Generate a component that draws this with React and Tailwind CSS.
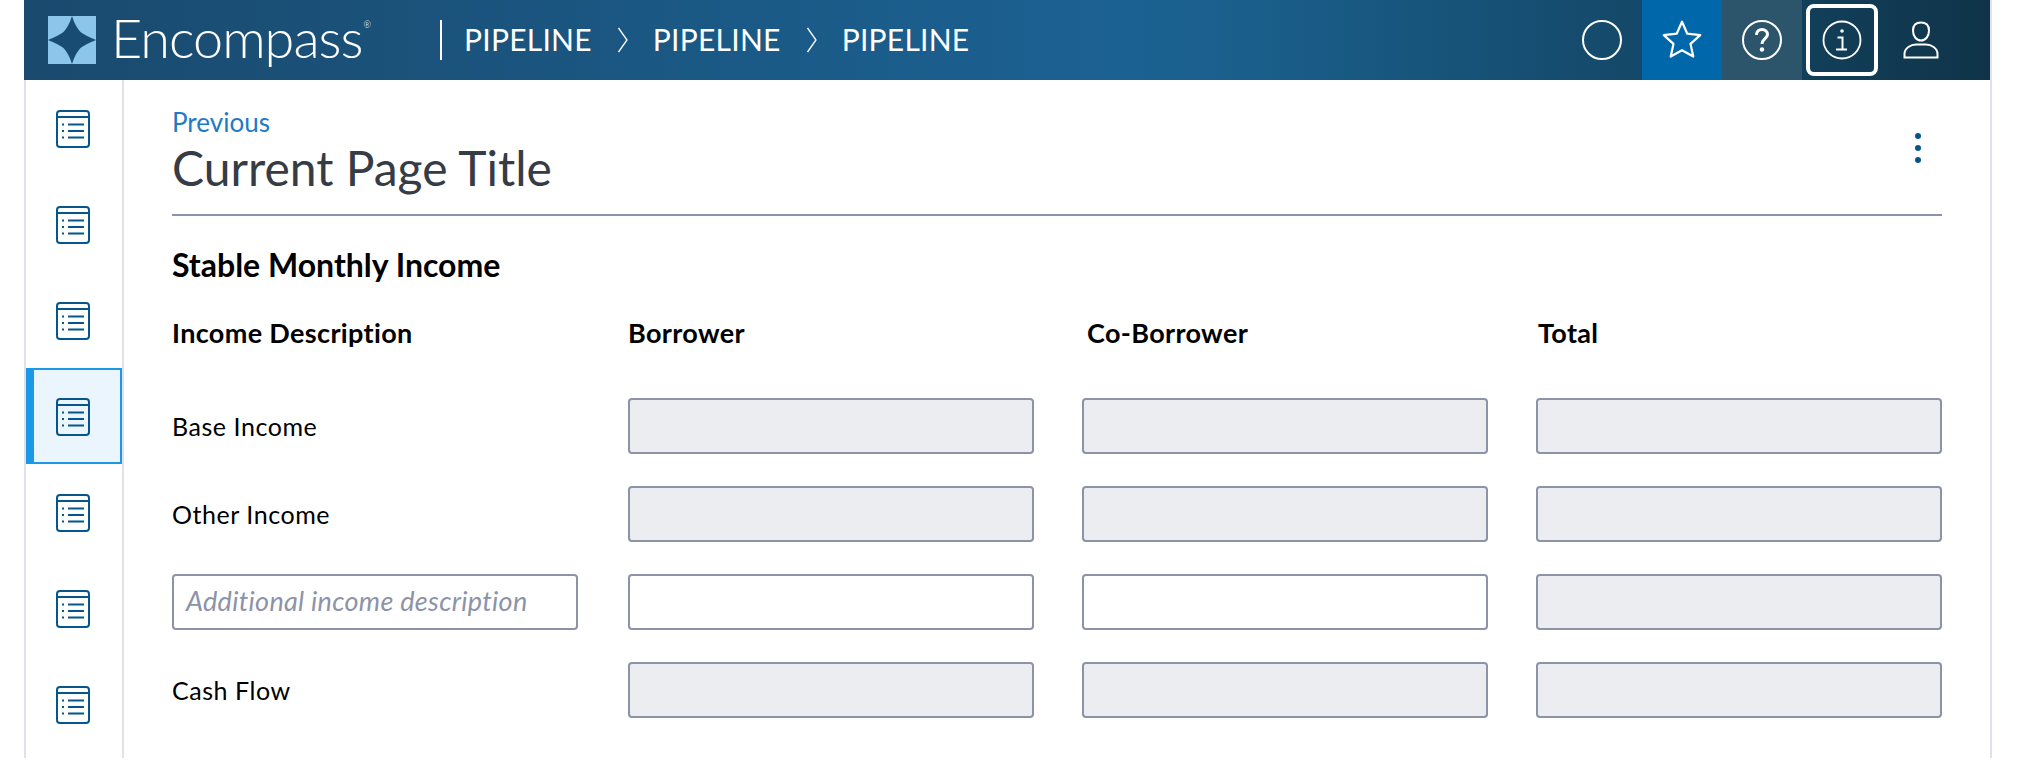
import React from "react";

const FONT = { fontFamily: "Lato, 'Open Sans', sans-serif" };

function ListIcon() {
  return (
    <svg width="34" height="38" viewBox="0 0 34 38" fill="none" stroke="#05568a" strokeWidth="2" className="translate-y-[1px]">
      <rect x="1" y="1" width="32" height="36" rx="3" />
      <path d="M1 7h32" />
      <path d="M12 14.500h16M12 21h16M12 27.500h16" />
      <path d="M6 14.500h2M6 21h2M6 27.500h2" />
    </svg>
  );
}

function Logo() {
  return (
    <svg width="48" height="48" viewBox="0 0 48 48">
      <rect width="48" height="48" fill="#8cc5ea" />
      <path d="M24 0 Q27 10 32.500 16 Q38 20 48 24 Q38 28 32.500 32 Q27 38 24 48 Q21 38 15.500 32 Q10 28 0 24 Q10 20 15.500 16 Q21 10 24 0 Z" fill="#194c72" />
    </svg>
  );
}

function Chevron() {
  return (
    <svg width="12" height="26" viewBox="0 0 12 26" fill="none" stroke="#fff" strokeWidth="1.300" className="ml-[25px] mr-[24px]">
      <path d="M1.500 1 L10 13 L1.500 25" />
    </svg>
  );
}

function Crumb({ children }) {
  return <span className="text-[30px] leading-none font-normal text-white tracking-[0.25px] -translate-y-[1px]">{children}</span>;
}

function Field({ on }) {
  return (
    <div className={"h-[56px] w-[406px] rounded-[4px] border-2 border-[#8c93a8] " + (on ? "bg-white" : "bg-[#ebedf0]")} />
  );
}

function Label({ children }) {
  return <div className="text-[25px] leading-[30px] tracking-[0.55px] text-black pt-[13px]">{children}</div>;
}

function Head({ children, className = "" }) {
  return <div className={"text-[27px] leading-[34px] font-bold tracking-[0.35px] text-black mb-[16px] " + className}>{children}</div>;
}

export default function App() {
  const items = [0, 1, 2, 3, 4, 5, 6];
  return (
    <div className="min-h-[778px] bg-white pl-[24px] pr-[26px]" style={FONT}>
      <div className="h-[758px] flex flex-col border-r-2 border-[#dfe3e8]">
        <header className="h-[80px] shrink-0 flex items-center bg-[linear-gradient(90deg,#1a4a6e_0%,#1b6192_55%,#1a5f8c_62%,#0f3449_100%)]">
          <div className="ml-[24px]"><Logo /></div>
          <div className="ml-[15px] text-[54px] leading-none font-light text-white tracking-[-1px] flex -translate-y-[2px]">
            Encompass<span className="text-[9px] leading-none mt-[9px] ml-[1px] tracking-normal">®</span>
          </div>
          <div className="ml-[69px] w-[2px] h-[40px] bg-white" />
          <div className="ml-[22px] flex items-center">
            <Crumb>PIPELINE</Crumb><Chevron /><Crumb>PIPELINE</Crumb><Chevron /><Crumb>PIPELINE</Crumb>
          </div>
          <div className="ml-auto flex items-center h-full">
            <div className="w-[80px] h-full flex items-center justify-center">
              <svg width="42" height="42" viewBox="0 0 42 42" fill="none" stroke="#fff" strokeWidth="2"><circle cx="21" cy="21" r="19" /></svg>
            </div>
            <div className="w-[80px] h-full flex items-center justify-center bg-[#0068aa]">
              <svg width="42" height="42" viewBox="0 0 38 38" fill="none" stroke="#fff" strokeWidth="2" strokeLinejoin="round"><path d="M19 2.500 L23.800 13.300 L35.500 14.600 L26.700 22.500 L29.200 34 L19 28.200 L8.800 34 L11.300 22.500 L2.500 14.600 L14.200 13.300 Z" /></svg>
            </div>
            <div className="w-[80px] h-full flex items-center justify-center bg-[#2c546b]">
              <svg width="42" height="42" viewBox="0 0 42 42" fill="none" stroke="#fff" strokeWidth="2">
                <circle cx="21" cy="21" r="19" />
                <path d="M15.500 16 C15.500 12.500 18 10.500 21 10.500 C24 10.500 26.500 12.500 26.500 15.500 C26.500 19.500 21 20 21 25" strokeWidth="3" />
                <circle cx="21" cy="30.500" r="2.200" fill="#fff" stroke="none" />
              </svg>
            </div>
            <div className="w-[72px] h-[72px] ml-[4px] rounded-[8px] border-[4px] border-white flex items-center justify-center">
              <svg width="40" height="40" viewBox="0 0 40 40" fill="none" stroke="#fff" strokeWidth="1.800">
                <circle cx="20" cy="20" r="18.500" />
                <circle cx="20" cy="11" r="1.800" fill="#fff" stroke="none" />
                <path d="M15.500 17.500h5v12M14 29.500h11" strokeWidth="2" />
              </svg>
            </div>
            <div className="w-[112px] h-full flex items-center justify-center pr-[26px]">
              <svg width="36" height="38" viewBox="0 0 36 38" fill="none" stroke="#fff" strokeWidth="2">
                <path d="M18 1.500 C23.500 1.500 26 5 26 9.500 C26 15.500 22.500 19.500 18 19.500 C13.500 19.500 10 15.500 10 9.500 C10 5 12.500 1.500 18 1.500 Z" />
                <path d="M1.500 36.500 V33 C1.500 27 8 23.500 13 23.500 H23 C28 23.500 34.500 27 34.500 33 V36.500 Z" />
              </svg>
            </div>
          </div>
        </header>
        <div className="flex-1 flex min-h-0 overflow-hidden">
          <aside className="w-[100px] shrink-0 border-x-2 border-[#dfe3e8]">
            {items.map((i) => (
              <div key={i} className={"h-[96px] flex items-center justify-center " + (i === 3 ? "border-2 border-l-[8px] border-[#1b98e6] bg-[#ebf5fd] pr-[8px]" : "pr-[2px]")}>
                <ListIcon />
              </div>
            ))}
          </aside>
          <main className="flex-1 pl-[48px] pr-[48px]">
            <div className="h-[136px] border-b-2 border-[#8c93a8] relative">
              <div className="pt-[27px] text-[26px] leading-[30px] text-[#1e7ac5]">Previous</div>
              <div className="mt-[3px] text-[48px] leading-[56px] font-normal text-[#353c46]">Current Page Title</div>
              <svg className="absolute right-[20px] top-[52px]" width="8" height="32" viewBox="0 0 8 32" fill="#05568a">
                <circle cx="4" cy="4" r="3" /><circle cx="4" cy="16" r="3" /><circle cx="4" cy="28" r="3" />
              </svg>
            </div>
            <h2 className="mt-[32px] text-[32px] leading-[34px] font-bold text-black">Stable Monthly Income</h2>
            <div className="mt-[34px] grid grid-cols-[408px_406px_406px_406px] gap-x-[48px] gap-y-[32px]">
              <Head>Income Description</Head>
              <Head>Borrower</Head>
              <Head className="pl-[5px]">Co-Borrower</Head>
              <Head className="pl-[2px]">Total</Head>
              <Label>Base Income</Label><Field /><Field /><Field />
              <Label>Other Income</Label><Field /><Field /><Field />
              <div className="h-[56px] w-[406px] rounded-[4px] border-2 border-[#8c93a8] bg-white pl-[12px] pb-[2px] flex items-center text-[27px] tracking-[0.3px] italic text-[#8c93a8]">Additional income description</div>
              <Field on /><Field on /><Field />
              <Label>Cash Flow</Label><Field /><Field /><Field />
            </div>
          </main>
        </div>
      </div>
    </div>
  );
}
